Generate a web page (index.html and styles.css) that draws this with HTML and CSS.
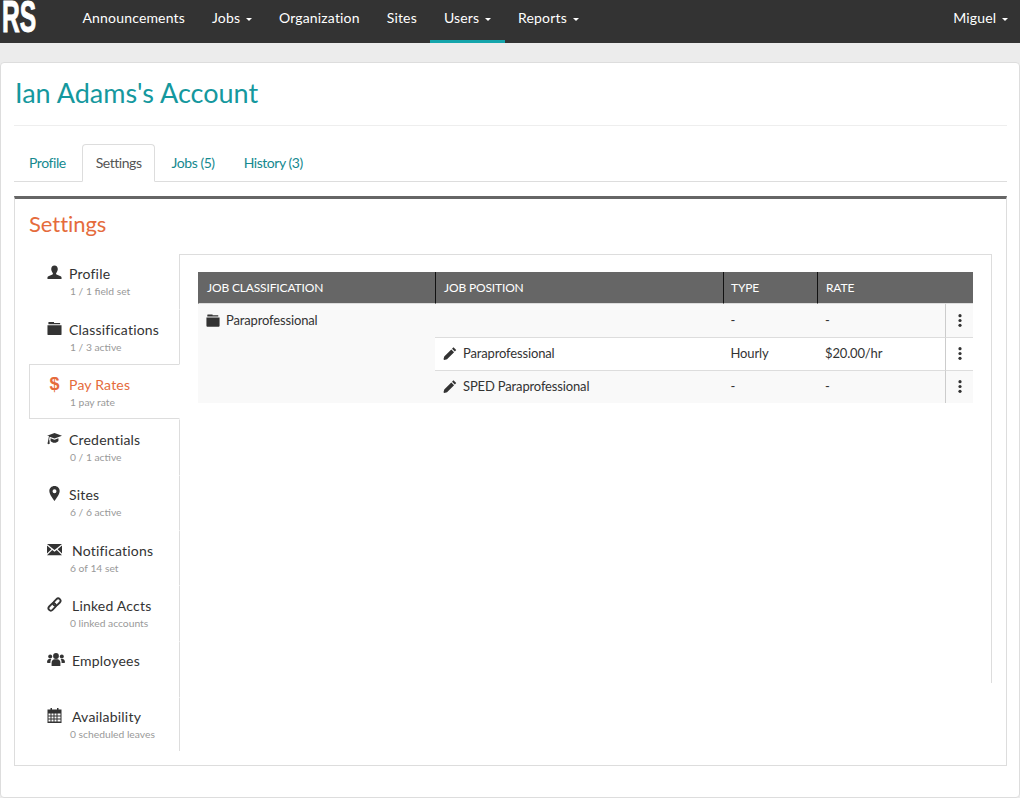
FILE: index.html
```html
<!DOCTYPE html>
<html lang="en">
<head>
<meta charset="utf-8">
<title>Ian Adams's Account</title>
<link rel="stylesheet" href="styles.css">
</head>
<body>
<svg class="defs" width="0" height="0" aria-hidden="true">
  <defs>
    <symbol id="i-user" viewBox="0 0 16 16"><path d="M8 .5c2.300 0 3.500 1.700 3.500 3.800 0 1.500-.7 3.100-1.600 4.100-.4.500-.3 1.300.3 1.600l4.300 2c.8.400 1 1 1 1.700V15H.5v-1.300c0-.7.200-1.300 1-1.700l4.300-2c.6-.3.700-1.100.3-1.600-.9-1-1.600-2.600-1.600-4.100C4.500 2.200 5.700.5 8 .5z"/></symbol>
    <symbol id="i-folder" viewBox="0 0 16 14"><path d="M2 0h5.500v1H14v1.500H1.500V1C1.500.4 1.500 0 2 0zM.5 3.500h15V13c0 .6-.4 1-1 1h-13c-.6 0-1-.4-1-1z"/></symbol>
    <symbol id="i-cap" viewBox="0 0 16 14"><path d="M8 1l8 3-8 3-5.200-2-.6 3.300c.3.200.5.500.4.900l.3 3.300-1.500.5-.9-.7.800-3.200c-.2-.3-.2-.7.100-.9l.7-3.900L0 4z"/><path d="M3.800 6.800L8 8.300l4.200-1.500v2.900C11.200 11 9.800 11.600 8 11.600S4.800 11 3.800 9.700z"/></symbol>
    <symbol id="i-pin" viewBox="0 0 12 16"><path fill-rule="evenodd" d="M6 0c3.200 0 5.500 2.300 5.500 5.400C11.500 8.800 8 13.400 6 16 4 13.400.5 8.800.5 5.400.5 2.300 2.800 0 6 0zm0 3.400a2.100 2.100 0 100 4.200 2.100 2.100 0 000-4.200z"/></symbol>
    <symbol id="i-mail" viewBox="0 0 16 12"><path d="M0 0h16L8 6.500zM0 1.600l4.700 4L0 10.300zM16 1.600v8.700l-4.700-4.700zM5.600 6.400L8 8.300l2.400-1.900L16 12H0z"/></symbol>
    <symbol id="i-link" viewBox="0 0 16 16"><g fill="none" stroke="#333" stroke-width="2" transform="rotate(-45 8 8)"><rect x="0" y="5.500" width="9" height="5" rx="2.500"/><rect x="7" y="5.500" width="9" height="5" rx="2.500"/></g></symbol>
    <symbol id="i-users" viewBox="0 0 18 13"><circle cx="9" cy="3" r="2.900"/><circle cx="3.200" cy="3.500" r="2"/><circle cx="14.800" cy="3.500" r="2"/><path d="M4.600 13V9.500c0-2 1.500-3.300 2.900-3.300h3c1.400 0 2.900 1.300 2.900 3.300V13zM0 9.600C0 7.300 1 6 2.300 6h2.100C3.600 7 3.400 8.400 3.400 10H1c-.6 0-1-.1-1-.4zM18 9.600C18 7.300 17 6 15.700 6h-2.100c.8 1 1 2.400 1 4H17c.6 0 1-.1 1-.4z"/></symbol>
    <symbol id="i-cal" viewBox="0 0 14 15"><path fill-rule="evenodd" d="M3 0h1.500v1.500h5V0H11v1.500h3V15H0V1.500h3zM1 5.500v2h2v-2zm3 0v2h2v-2zm3 0v2h2v-2zm3 0v2h3v-2zm-9 3v2h2v-2zm3 0v2h2v-2zm3 0v2h2v-2zm3 0v2h3v-2zm-9 3v2h2v-2zm3 0v2h2v-2zm3 0v2h2v-2zm3 0v2h3v-2z"/></symbol>
    <symbol id="i-pencil" viewBox="0 0 14 14"><path d="M10.700.3l3 3-1.500 1.500-3-3zM8.400 2.600l3 3-7.600 7.600-3 .8-.8-.8.800-3z"/></symbol>
    <symbol id="i-dots" viewBox="0 0 4 13"><circle cx="2" cy="1.700" r="1.600"/><circle cx="2" cy="6.500" r="1.600"/><circle cx="2" cy="11.300" r="1.600"/></symbol>
  </defs>
</svg>

<nav class="navbar">
  <div class="brand-box"><a class="brand" href="#">RS</a></div>
  <ul class="nav-list">
    <li><a href="#">Announcements</a></li>
    <li><a href="#">Jobs <span class="caret"></span></a></li>
    <li><a href="#">Organization</a></li>
    <li><a href="#">Sites</a></li>
    <li class="current"><a href="#">Users <span class="caret"></span></a></li>
    <li><a href="#">Reports <span class="caret"></span></a></li>
  </ul>
  <a class="nav-user" href="#">Miguel <span class="caret"></span></a>
</nav>

<main class="card">
  <h1 class="page-title">Ian Adams's Account</h1>
  <ul class="tabs">
    <li><a href="#">Profile</a></li>
    <li class="active"><a href="#">Settings</a></li>
    <li><a href="#">Jobs (5)</a></li>
    <li><a href="#">History (3)</a></li>
  </ul>

  <section class="panel">
    <h2 class="panel-title">Settings</h2>
    <div class="settings">
      <ul class="side">
        <li class="side-item up"><svg class="ic"><use href="#i-user"/></svg><div><div class="side-label">Profile</div><div class="side-sub">1 / 1 field set</div></div></li>
        <li class="side-item"><svg class="ic"><use href="#i-folder"/></svg><div><div class="side-label">Classifications</div><div class="side-sub">1 / 3 active</div></div></li>
        <li class="side-item on"><span class="ic dollar">$</span><div><div class="side-label">Pay Rates</div><div class="side-sub">1 pay rate</div></div></li>
        <li class="side-item tall"><svg class="ic"><use href="#i-cap"/></svg><div><div class="side-label">Credentials</div><div class="side-sub">0 / 1 active</div></div></li>
        <li class="side-item up"><svg class="ic"><use href="#i-pin"/></svg><div><div class="side-label">Sites</div><div class="side-sub">6 / 6 active</div></div></li>
        <li class="side-item wide"><svg class="ic"><use href="#i-mail"/></svg><div><div class="side-label">Notifications</div><div class="side-sub">6 of 14 set</div></div></li>
        <li class="side-item wide tall"><svg class="ic"><use href="#i-link"/></svg><div><div class="side-label">Linked Accts</div><div class="side-sub">0 linked accounts</div></div></li>
        <li class="side-item wide up tall"><svg class="ic ic-users"><use href="#i-users"/></svg><div><div class="side-label">Employees</div><div class="side-sub">&nbsp;</div></div></li>
        <li class="side-item wide up last"><svg class="ic"><use href="#i-cal"/></svg><div><div class="side-label">Availability</div><div class="side-sub">0 scheduled leaves</div></div></li>
      </ul>
      <div class="content">
        <table class="rates">
          <colgroup><col class="c1"><col class="c2"><col class="c3"><col class="c4"><col class="c5"></colgroup>
          <thead>
            <tr><th>Job Classification</th><th>Job Position</th><th class="typ">Type</th><th colspan="2">Rate</th></tr>
          </thead>
          <tbody>
            <tr class="shade">
              <td rowspan="3" class="cls"><svg class="tic"><use href="#i-folder"/></svg>Paraprofessional</td>
              <td class="first"></td><td class="first typ">-</td><td class="first">-</td>
              <td class="menu first"><svg class="dots"><use href="#i-dots"/></svg></td>
            </tr>
            <tr>
              <td><svg class="tic pen"><use href="#i-pencil"/></svg>Paraprofessional</td><td class="typ">Hourly</td><td>$20.00/hr</td>
              <td class="menu"><svg class="dots"><use href="#i-dots"/></svg></td>
            </tr>
            <tr class="shade">
              <td><svg class="tic pen"><use href="#i-pencil"/></svg>SPED Paraprofessional</td><td class="typ">-</td><td>-</td>
              <td class="menu"><svg class="dots"><use href="#i-dots"/></svg></td>
            </tr>
          </tbody>
        </table>
      </div>
    </div>
  </section>
</main>
</body>
</html>
```

FILE: styles.css
```css
* { box-sizing: border-box; }
html, body { margin: 0; padding: 0; }
body {
  height: 798px;
  overflow: hidden;
  background: #ececec;
  font-family: Lato, "Open Sans", sans-serif;
  font-size: 14px;
  color: #333;
}
a { color: inherit; text-decoration: none; }
ul { list-style: none; margin: 0; padding: 0; }
.defs { position: absolute; }

.navbar {
  display: flex;
  height: 43px;
  background: #333;
  color: #fff;
  letter-spacing: .17px;
}
.brand-box { width: 69px; flex: none; padding-left: 2px; }
.brand {
  display: block;
  width: 62px;
  font-family: "Liberation Sans", sans-serif;
  font-weight: 700;
  font-size: 44px;
  line-height: 33px;
  letter-spacing: 0;
  -webkit-text-stroke: 1px #fff;
  transform: scaleX(.56);
  transform-origin: 0 0;
}
.nav-list { display: flex; flex: 1; }
.nav-list a {
  display: block;
  height: 43px;
  padding: 9px 13.500px 0;
  line-height: 17px;
}
.nav-list .current a { border-bottom: 3px solid #15a5ab; }
.nav-user { padding: 9px 12px 0 0; line-height: 17px; }
.caret {
  display: inline-block;
  width: 0;
  height: 0;
  margin-left: 2px;
  vertical-align: middle;
  border-top: 3px solid #fff;
  border-left: 3px solid transparent;
  border-right: 3px solid transparent;
}

.card {
  height: 736px;
  margin-top: 19px;
  padding: 0 12px 0 13px;
  background: #fff;
  border: 1px solid #ddd;
  border-radius: 4px;
}
.page-title {
  margin: 0;
  height: 63px;
  padding: 13px 0 0 1px;
  border-bottom: 1px solid #eee;
  font-size: 27px;
  font-weight: 400;
  line-height: 34px;
  color: #15989e;
}
.tabs {
  display: flex;
  height: 38px;
  margin-top: 18px;
  border-bottom: 1px solid #ddd;
}
.tabs li { margin-bottom: -1px; margin-right: 2px; }
.tabs a {
  display: block;
  height: 38px;
  padding: 9px 13px;
  line-height: 17px;
  letter-spacing: -.45px;
  color: #15898f;
  border: 1px solid transparent;
  border-radius: 4px 4px 0 0;
}
.tabs li:first-child a { padding-left: 14px; padding-right: 14px; margin-right: -1px; }
.tabs .active a {
  padding-right: 12px;
  color: #555;
  background: #fff;
  border-color: #ddd #ddd #fff;
}
.tabs li:nth-child(3) a { padding-left: 14px; padding-right: 12px; }

.panel {
  height: 570px;
  margin-top: 14px;
  padding: 0 15px 0 14px;
  border: 1px solid #ddd;
  border-top: 3px solid #666;
}
.panel-title {
  margin: 0;
  height: 55px;
  padding-top: 12px;
  font-size: 22px;
  line-height: 26px;
  font-weight: 400;
  letter-spacing: -.05px;
  color: #e56b3c;
}
.settings { display: flex; align-items: flex-start; }

.side { width: 151px; flex: none; }
.side-item {
  display: flex;
  gap: 7px;
  height: 55px;
  padding: 12px 0 0 18px;
  border-right: 1px solid #ddd;
  border-top: 1px solid #fff;
  color: #333;
}
.side-item.up { padding-top: 11px; }
.side-item.tall { height: 56px; }
.side-item.last { height: 54px; }
.side-item.on {
  position: relative;
  width: 151px;
  color: #e56b3c;
  border: 1px solid #ddd;
  border-right-color: #fff;
  padding-top: 12px;
  padding-left: 17px;
}
.ic {
  width: 15px;
  height: 15px;
  flex: none;
  margin-top: -1px;
  fill: currentColor;
  color: #333;
}
.wide .ic { margin-right: 3px; }
.wide .ic-users { width: 18px; margin-right: 0; }
.on .ic { color: #e56b3c; }
.dollar {
  margin-top: 0;
  font-family: "Liberation Sans", sans-serif;
  font-weight: 700;
  font-size: 18px;
  line-height: 14px;
  text-align: center;
}
.side-label { font-size: 14px; line-height: 15px; letter-spacing: .2px; white-space: nowrap; }
.side-sub {
  margin-top: 3.500px;
  margin-left: 1px;
  font-size: 10.300px;
  line-height: 12px;
  color: #999;
  white-space: nowrap;
}
.on .side-sub { margin-top: 4px; }
.wide .side-sub { margin-left: -2px; }

.content {
  flex: 1;
  height: 429px;
  margin-left: -1px;
  padding: 17px 18px 0 19px;
  border-top: 1px solid #ddd;
  border-right: 1px solid #ddd;
}
.rates {
  width: 775px;
  table-layout: fixed;
  border-collapse: separate;
  border-spacing: 0;
  font-size: 13px;
  letter-spacing: -.15px;
}
.c1 { width: 237px; }
.c2 { width: 288px; }
.c3 { width: 94px; }
.c4 { width: 128px; }
.c5 { width: 28px; }
.rates th {
  height: 32px;
  padding: 0 8px 1px;
  background: #666;
  color: #fff;
  font-size: 12px;
  font-weight: 400;
  text-align: left;
  text-transform: uppercase;
  border-left: 1px solid #111;
  border-bottom: 1px solid #ddd;
}
.rates th:first-child { border-left-color: #666; }
.rates td {
  height: 33px;
  padding: 0 8px 2px;
  border-top: 1px solid #ddd;
  vertical-align: middle;
  white-space: nowrap;
}
.rates th.typ { padding-left: 7px; }
.rates td.typ { padding-left: 7.500px; }
.rates td.first { border-top: 0; }
.rates .shade td { background: #f9f9f9; }
.rates .cls { background: #f9f9f9; border-top: 0; vertical-align: top; padding-top: 8px; }
.tic { width: 14px; height: 13px; margin-right: 6px; fill: #333; vertical-align: -2px; }
.pen { width: 14px; height: 13px; }
.rates td.menu { padding: 0 0 5px; text-align: center; border-left: 1px solid #ccc; }
.rates td.menu.first { padding-bottom: 3px; }
.dots { width: 4px; height: 13px; fill: #333; vertical-align: middle; }
```
